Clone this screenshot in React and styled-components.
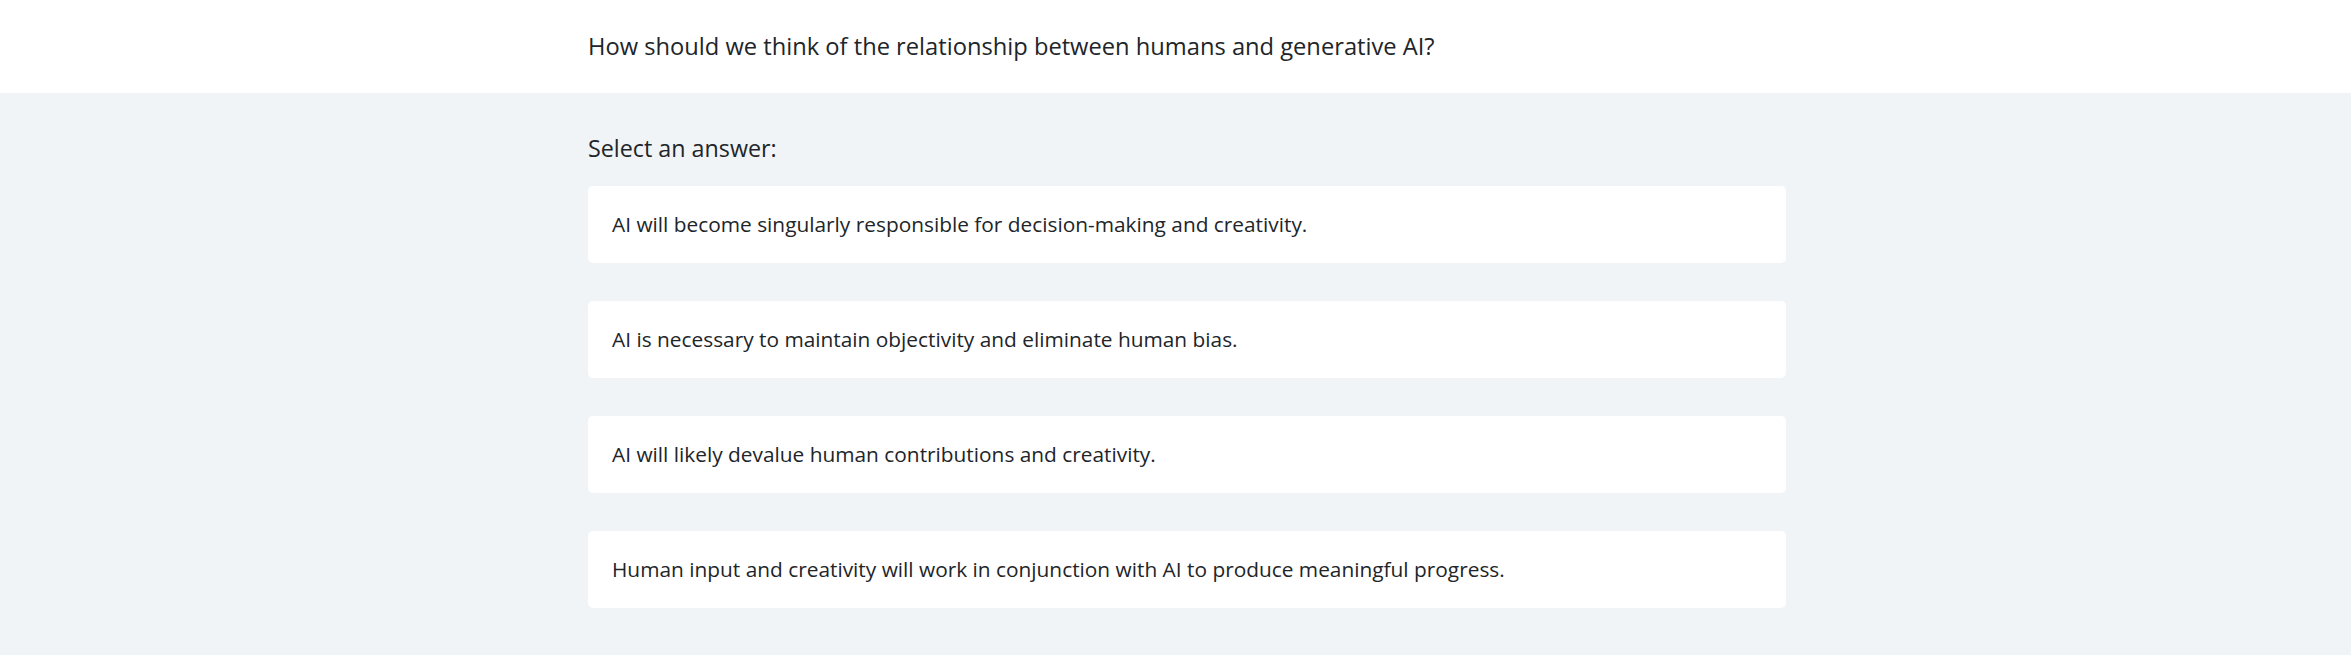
import React from 'react'
import styled, { createGlobalStyle } from 'styled-components'

const GlobalStyle = createGlobalStyle`
  html, body {
    margin: 0;
    padding: 0;
    background: #f1f4f7;
  }
  body {
    font-family: 'Open Sans', 'Noto Sans', sans-serif;
    color: #212529;
  }
`

const Header = styled.header`
  background: #ffffff;
  height: 93px;
  display: flex;
  align-items: center;
`

const Container = styled.div`
  width: 1198px;
  margin-left: 588px;
`

const Question = styled.h1`
  margin: 0;
  font-size: 23.7px;
  font-weight: 400;
  line-height: 1.5;
  color: #212529;
`

const Body = styled.main`
  background: #f1f4f7;
  padding: 38px 0 47px;
`

const Prompt = styled.p`
  margin: 0 0 20px;
  font-size: 23.3px;
  line-height: 1.5;
  color: #212529;
`

const AnswerList = styled.div`
  display: flex;
  flex-direction: column;
  gap: 38px;
`

const Answer = styled.button`
  display: flex;
  align-items: center;
  width: 100%;
  height: 77px;
  padding: 0 24px;
  border: none;
  border-radius: 5px;
  background: #ffffff;
  font-family: inherit;
  font-size: 20.85px;
  color: #212529;
  text-align: left;
  cursor: pointer;
`

const answers = [
  'AI will become singularly responsible for decision-making and creativity.',
  'AI is necessary to maintain objectivity and eliminate human bias.',
  'AI will likely devalue human contributions and creativity.',
  'Human input and creativity will work in conjunction with AI to produce meaningful progress.'
]

const App = () => {
  return (
    <>
      <GlobalStyle />
      <Header>
        <Container>
          <Question>How should we think of the relationship between humans and generative AI?</Question>
        </Container>
      </Header>
      <Body>
        <Container>
          <Prompt>Select an answer:</Prompt>
          <AnswerList>
            {answers.map((text) => (
              <Answer key={text}>{text}</Answer>
            ))}
          </AnswerList>
        </Container>
      </Body>
    </>
  )
}

export default App
